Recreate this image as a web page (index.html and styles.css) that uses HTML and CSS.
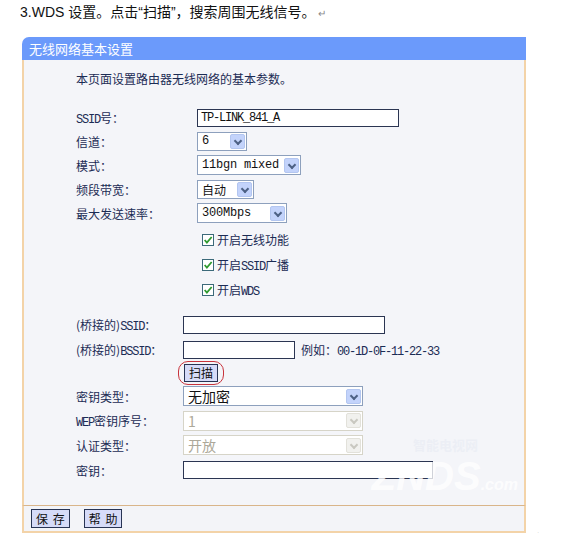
FILE: index.html
```html
<!DOCTYPE html>
<html lang="zh-CN">

<head>
    <meta charset="utf-8">
    <meta name="viewport" content="width=device-width, initial-scale=1.0">
    <title>WDS 设置</title>
    <link rel="stylesheet" href="styles.css">
</head>

<body>
    <p class="step">3.WDS 设置。点击“扫描”，搜索周围无线信号。<span class="mark">↵</span></p>

    <div class="wrap">
        <div class="panel">
            <div class="panel-title">无线网络基本设置</div>
            <div class="panel-body">
                <p class="intro">本页面设置路由器无线网络的基本参数。</p>

                <div class="rows top">
                    <div class="row first">
                        <span class="label"><span class="mono">SSID</span>号：</span>
                        <span class="input mono w-ssid">TP-LINK_841_A</span>
                    </div>
                    <div class="row">
                        <span class="label">信道：</span>
                        <span class="select w-chan"><span class="val mono">6</span><span class="arrow"></span></span>
                    </div>
                    <div class="row">
                        <span class="label">模式：</span>
                        <span class="select w-mode tall"><span class="val mono">11bgn mixed</span><span class="arrow"></span></span>
                    </div>
                    <div class="row">
                        <span class="label">频段带宽：</span>
                        <span class="select w-band"><span class="val">自动</span><span class="arrow"></span></span>
                    </div>
                    <div class="row">
                        <span class="label">最大发送速率：</span>
                        <span class="select w-rate tall"><span class="val mono">300Mbps</span><span class="arrow"></span></span>
                    </div>
                    <div class="row check first-check">
                        <span class="label"></span>
                        <span class="cb"><svg viewBox="0 0 9 9"><path d="M1.5 4.5 L3.5 6.8 L7.8 1.8" /></svg></span>
                        <span class="cb-text">开启无线功能</span>
                    </div>
                    <div class="row check">
                        <span class="label"></span>
                        <span class="cb"><svg viewBox="0 0 9 9"><path d="M1.5 4.5 L3.5 6.8 L7.8 1.8" /></svg></span>
                        <span class="cb-text">开启<span class="mono">SSID</span>广播</span>
                    </div>
                    <div class="row check">
                        <span class="label"></span>
                        <span class="cb"><svg viewBox="0 0 9 9"><path d="M1.5 4.5 L3.5 6.8 L7.8 1.8" /></svg></span>
                        <span class="cb-text">开启<span class="mono">WDS</span></span>
                    </div>
                </div>

                <div class="rows bottom">
                    <div class="row r24">
                        <span class="label">(桥接的)<span class="mono">SSID</span>：</span>
                        <span class="input w-bssid-name"></span>
                    </div>
                    <div class="row r25">
                        <span class="label">(桥接的)<span class="mono">BSSID</span>：</span>
                        <span class="input w-mac"></span>
                        <span class="hint">例如：<span class="mono">00-1D-0F-11-22-33</span></span>
                    </div>
                    <div class="row r22">
                        <span class="label"></span>
                        <span class="circled"><button class="btn scan">扫描</button></span>
                    </div>
                    <div class="row r24">
                        <span class="label">密钥类型：</span>
                        <span class="select w-key big"><span class="val">无加密</span><span class="arrow"></span></span>
                    </div>
                    <div class="row r25">
                        <span class="label"><span class="mono">WEP</span>密钥序号：</span>
                        <span class="select w-key big off"><span class="val">1</span><span class="arrow"></span></span>
                    </div>
                    <div class="row r24">
                        <span class="label">认证类型：</span>
                        <span class="select w-key big off"><span class="val">开放</span><span class="arrow"></span></span>
                    </div>
                    <div class="row r26">
                        <span class="label">密钥：</span>
                        <span class="input w-pass"></span>
                    </div>
                </div>

                <div class="stamp">
                    <span class="stamp-cn">智能电视网</span>
                    <span class="stamp-en">ZNDS<small>.com</small></span>
                </div>
            </div>
            <div class="panel-foot">
                <button class="btn">保&nbsp;存</button>
                <button class="btn">帮&nbsp;助</button>
            </div>
        </div>
        <span class="mark">↵</span>
    </div>
</body>

</html>
```

FILE: styles.css
```css
body {
    margin: 0;
    background: #fff;
    font-family: "Liberation Sans", "Noto Sans CJK SC", sans-serif;
}

.step {
    margin: 0;
    padding: 3px 0 0 20px;
    height: 34px;
    font-size: 14px;
    line-height: 18px;
    color: #111;
}

.mark {
    color: #888;
    font-size: 10px;
    margin-left: 2px;
}

.wrap {
    display: flex;
    align-items: flex-end;
    padding-left: 22px;
}

.wrap > .mark {
    margin: 0 0 -8px 6px;
}

.panel {
    width: 504px;
    font-family: "Noto Sans CJK SC", sans-serif;
    font-size: 12px;
    color: #1c2c55;
}

/* narrow fixed-width latin, 6px per character */
.mono {
    font-family: "Liberation Mono", monospace;
    font-size: 12px;
    letter-spacing: -1.2px;
}

.panel-title {
    height: 23px;
    line-height: 23px;
    padding-left: 7px;
    background: #6b9afb;
    color: #fff;
    font-size: 13px;
    border-top-left-radius: 7px;
}

.panel-body {
    position: relative;
    background: #f4f5f9;
    border-left: 2px solid #f3d3a8;
    border-right: 2px solid #f3d3a8;
    padding: 11px 0 22px 52px;
}

.intro {
    margin: 0 0 19px 0;
    height: 16px;
    line-height: 16px;
    color: #1c2c55;
}

.row {
    display: flex;
    align-items: center;
    height: 24px;
}

.top .row.first {
    height: 23px;
}

.top .label {
    width: 121px;
}

.bottom {
    margin-top: 11px;
}

.bottom .label {
    width: 107px;
}

.label {
    flex: none;
}

.row.check {
    height: 25px;
}

.row.first-check {
    margin-top: 2px;
}

.r22 { height: 22px; }
.r24 { height: 24px; }
.r25 { height: 25px; }
.r26 { height: 26px; }

.input {
    box-sizing: border-box;
    height: 18px;
    line-height: 16px;
    background: #fff;
    border: 1px solid #2b3552;
    padding-left: 3px;
    color: #111;
}

.w-ssid { width: 202px; }
.w-bssid-name { width: 202px; }
.w-mac { width: 112px; }
.w-pass { width: 250px; }

.select {
    box-sizing: border-box;
    display: flex;
    align-items: center;
    height: 19px;
    background: #fff;
    border: 1px solid #8da0bd;
    padding: 1px;
    color: #111;
}

.select.tall {
    height: 20px;
}

.select.big {
    height: 20px;
    font-size: 14px;
}

.select .val {
    flex: 1;
    padding-left: 3px;
    white-space: nowrap;
}

.select .val.mono {
    letter-spacing: -0.2px;
}

.arrow {
    flex: none;
    width: 15px;
    height: 15px;
    background: #c3d3fb;
    border: 1px solid #b3c6f0;
    box-sizing: border-box;
    border-radius: 2px;
    position: relative;
}

.arrow::after {
    content: "";
    position: absolute;
    left: 4px;
    top: 3px;
    width: 4px;
    height: 4px;
    border-right: 2px solid #4d6185;
    border-bottom: 2px solid #4d6185;
    transform: rotate(45deg);
}

.w-chan { width: 50px; }
.w-mode { width: 104px; }
.w-band { width: 57px; }
.w-rate { width: 90px; }
.w-key { width: 180px; }

.select.off {
    border-color: #d6d4c8;
    color: #aca899;
    background: #fff;
}

.select.off .arrow {
    background: #f1f1ee;
    border-color: #e2e1da;
}

.select.off .arrow::after {
    border-color: #c9c8c0;
}

.cb {
    box-sizing: border-box;
    width: 12px;
    height: 12px;
    margin-left: 5px;
    margin-right: 3px;
    border: 1px solid #3c6a7a;
    background: #fff;
    display: inline-flex;
}

.cb svg {
    width: 10px;
    height: 10px;
}

.cb path {
    fill: none;
    stroke: #2f9a2f;
    stroke-width: 1.6;
}

.cb-text {
    color: #1c2c55;
}

.hint {
    margin-left: 6px;
    color: #1c2c55;
}

.btn {
    font-family: "Noto Sans CJK SC", sans-serif;
    font-size: 12px;
    line-height: 14px;
    height: 19px;
    padding: 0 4px;
    background: #d6dbf8;
    color: #111;
    border: 1px solid #283454;
    border-radius: 0;
}

.circled {
    display: inline-flex;
    padding: 2px 5px;
    margin-left: -5px;
    border: 1px solid #c8333c;
    border-radius: 10px;
}

.scan {
    height: 18px;
}

.stamp {
    position: absolute;
    right: 6px;
    bottom: 0;
    display: flex;
    flex-direction: column;
    align-items: flex-end;
    pointer-events: none;
}

.stamp-cn {
    font-size: 13px;
    font-weight: bold;
    line-height: 14px;
    margin: 0 40px 4px 0;
    color: rgba(235, 238, 245, 0.9);
}

.stamp-en {
    font-family: "Liberation Sans", sans-serif;
    font-size: 40px;
    font-weight: bold;
    font-style: italic;
    line-height: 40px;
    color: rgba(255, 255, 255, 0.8);
}

.stamp-en small {
    font-size: 16px;
}

.panel-foot {
    display: flex;
    gap: 14px;
    align-items: center;
    height: 25px;
    padding-left: 7px;
    background: #f3f4f8;
    border: 2px solid #f3d3a8;
    border-top: 1px solid #d9b58a;
}

.panel-foot .btn {
    padding: 0 3px 0 4px;
    letter-spacing: 1px;
}
```
